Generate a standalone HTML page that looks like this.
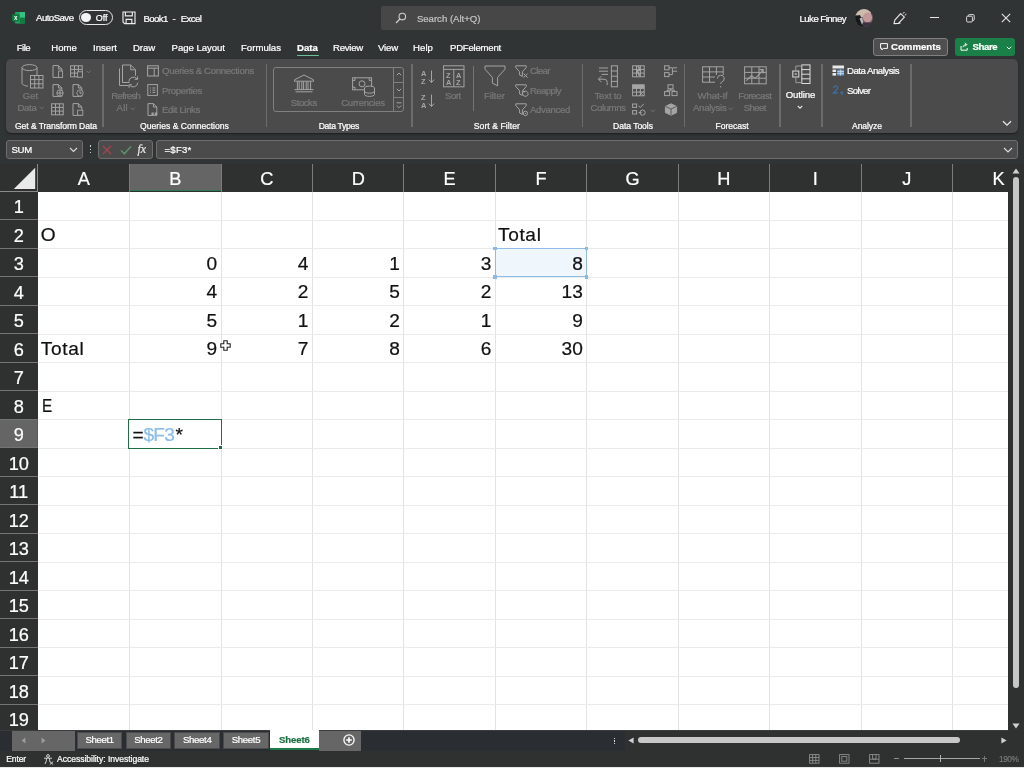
<!DOCTYPE html>
<html lang="en"><head><meta charset="utf-8"><title>Book1 - Excel</title>
<style>
html,body{margin:0;padding:0;}
body{width:1024px;height:768px;overflow:hidden;position:relative;background:#313435;font-family:"Liberation Sans",sans-serif;}
.b{position:absolute;display:block;}
.t{position:absolute;white-space:pre;display:block;-webkit-text-stroke:0.22px currentColor;}
svg{overflow:visible;}
</style></head><body>
<div id="app" style="position:absolute;left:0;top:0;width:1024px;height:768px;will-change:transform;">
<svg class="b" style="left:11.5px;top:11.5px;" width="13" height="11.5" viewBox="0 0 13 11.5"><rect x="3" y="0" width="10" height="11.5" rx="1" fill="#21a366"/><rect x="8" y="0" width="5" height="5.7" fill="#33c481"/><rect x="8" y="5.7" width="5" height="5.8" fill="#107c41"/><rect x="0" y="2.2" width="7.4" height="7.4" rx="0.8" fill="#0e7a3e"/><text x="3.7" y="8.2" font-family="Liberation Sans, sans-serif" font-size="6.3" font-weight="700" fill="#fff" text-anchor="middle">x</text></svg>
<span class="t" style="left:36.00px;top:12.44px;font-size:9.6px;line-height:11.52px;color:#ffffff;letter-spacing:-0.516px;">AutoSave</span>
<div class="b" style="left:78.5px;top:10.3px;width:34px;height:14.4px;border:1.2px solid #e8e8e8;border-radius:8px;box-sizing:border-box;"></div>
<div class="b" style="left:81px;top:13.4px;width:9.8px;height:8.4px;background:#f4f4f4;border-radius:50%;"></div>
<span class="t" style="left:95.80px;top:12.80px;font-size:9.0px;line-height:10.80px;color:#ffffff;letter-spacing:-0.013px;">Off</span>
<svg class="b" style="left:121.5px;top:11.3px;" width="14" height="13.5" viewBox="0 0 14 13.5"><path d="M1 1h12v11.6H2.7L1 11z M3.4 1v3.9h6.9V1 M4.1 12.6V8.3h5.7v4.3" fill="none" stroke="#ededed" stroke-width="1.15"/></svg>
<span class="t" style="left:143.60px;top:12.64px;font-size:9.6px;line-height:11.52px;color:#ffffff;letter-spacing:-0.644px;">Book1</span>
<span class="t" style="left:172.60px;top:12.64px;font-size:9.6px;line-height:11.52px;color:#ffffff;letter-spacing:0.000px;">-</span>
<span class="t" style="left:180.80px;top:12.64px;font-size:9.6px;line-height:11.52px;color:#ffffff;letter-spacing:-0.595px;">Excel</span>
<div class="b" style="left:381px;top:6px;width:275.3px;height:24px;background:#474747;border-radius:2px;"></div>
<svg class="b" style="left:395px;top:12px;" width="12" height="12" viewBox="0 0 12 12"><circle cx="7.3" cy="4.6" r="3.3" fill="none" stroke="#cfcfcf" stroke-width="1.1"/><path d="M4.9 7L1 11" stroke="#cfcfcf" stroke-width="1.2"/></svg>
<span class="t" style="left:416.90px;top:12.94px;font-size:9.6px;line-height:11.52px;color:#c2c2c2;letter-spacing:-0.011px;">Search (Alt+Q)</span>
<span class="t" style="left:799.50px;top:12.64px;font-size:9.6px;line-height:11.52px;color:#ffffff;letter-spacing:-0.527px;">Luke Finney</span>
<svg class="b" style="left:855px;top:9px;" width="18" height="18" viewBox="0 0 18 18"><defs><clipPath id="av"><circle cx="9" cy="9" r="8.9"/></clipPath></defs><g clip-path="url(#av)"><rect width="18" height="18" fill="#7a5f66"/><ellipse cx="8" cy="3.5" rx="8" ry="4.5" fill="#cbbcae"/><ellipse cx="12.5" cy="8.5" rx="4.6" ry="5" fill="#c39a9c"/><path d="M0 7l5-1 2 5 1.5 7H0z" fill="#17181a"/><path d="M4.5 9.5l2.6-1 1 4.5-1 3z" fill="#b9b9bd"/><rect x="8" y="13.5" width="10" height="5" fill="#3d3243"/></g></svg>
<svg class="b" style="left:892.5px;top:10.5px;" width="14" height="14" viewBox="0 0 14 14"><path d="M1 12.6l0.8-3.4L7.6 2.6l3.8 3.6-6 6.2z M5.4 12.4l2-0.4" fill="none" stroke="#ececec" stroke-width="1.1" stroke-linejoin="round"/><path d="M10.2 2.6l1.2-1.6 M11.8 4.2l1.6-1" fill="none" stroke="#ececec" stroke-width="1"/></svg>
<div class="b" style="left:930.3px;top:16.6px;width:8.4px;height:1px;background:#e6e6e6;"></div>
<svg class="b" style="left:966px;top:13.6px;" width="9" height="9" viewBox="0 0 9 9"><rect x="0.6" y="2.2" width="5.8" height="5.8" rx="1.1" fill="none" stroke="#e6e6e6" stroke-width="0.95"/><path d="M2.3 2V1.7a1.1 1.1 0 0 1 1.1-1.1h3.7a1.1 1.1 0 0 1 1.1 1.1v3.7a1.1 1.1 0 0 1-1.1 1.1H6.7" fill="none" stroke="#e6e6e6" stroke-width="0.95"/></svg>
<svg class="b" style="left:1001px;top:13px;" width="10" height="10" viewBox="0 0 10 10"><path d="M0.8 0.8l8.4 8.4M9.2 0.8L0.8 9.2" stroke="#e6e6e6" stroke-width="1.1"/></svg>
<span class="t" style="left:16.80px;top:41.64px;font-size:9.6px;line-height:11.52px;color:#ffffff;letter-spacing:-0.567px;">File</span>
<span class="t" style="left:51.20px;top:41.64px;font-size:9.6px;line-height:11.52px;color:#ffffff;letter-spacing:0.048px;">Home</span>
<span class="t" style="left:93.00px;top:41.64px;font-size:9.6px;line-height:11.52px;color:#ffffff;letter-spacing:-0.002px;">Insert</span>
<span class="t" style="left:133.00px;top:41.64px;font-size:9.6px;line-height:11.52px;color:#ffffff;letter-spacing:-0.100px;">Draw</span>
<span class="t" style="left:171.60px;top:41.64px;font-size:9.6px;line-height:11.52px;color:#ffffff;letter-spacing:-0.046px;">Page Layout</span>
<span class="t" style="left:241.00px;top:41.64px;font-size:9.6px;line-height:11.52px;color:#ffffff;letter-spacing:-0.001px;">Formulas</span>
<span class="t" style="left:297.00px;top:41.64px;font-size:9.6px;line-height:11.52px;color:#ffffff;letter-spacing:0.048px;font-weight:700;">Data</span>
<span class="t" style="left:333.00px;top:41.64px;font-size:9.6px;line-height:11.52px;color:#ffffff;letter-spacing:-0.246px;">Review</span>
<span class="t" style="left:378.00px;top:41.64px;font-size:9.6px;line-height:11.52px;color:#ffffff;letter-spacing:-0.159px;">View</span>
<span class="t" style="left:413.00px;top:41.64px;font-size:9.6px;line-height:11.52px;color:#ffffff;letter-spacing:0.064px;">Help</span>
<span class="t" style="left:450.00px;top:41.64px;font-size:9.6px;line-height:11.52px;color:#ffffff;letter-spacing:-0.235px;">PDFelement</span>
<div class="b" style="left:297px;top:54.9px;width:21.5px;height:1.2px;background:#6cc097;border-radius:1px;"></div>
<div class="b" style="left:873.4px;top:38px;width:75px;height:18.3px;background:#4f4f4f;border:1px solid #808080;border-radius:3px;box-sizing:border-box;"></div>
<svg class="b" style="left:879.5px;top:42.5px;" width="8" height="8" viewBox="0 0 8 8"><path d="M0.6 0.6h6.8v4.8H3.4L1.8 7V5.4H0.6z" fill="none" stroke="#fff" stroke-width="1"/></svg>
<span class="t" style="left:891.00px;top:41.44px;font-size:9.6px;line-height:11.52px;color:#ffffff;letter-spacing:0.024px;font-weight:700;">Comments</span>
<div class="b" style="left:954.6px;top:38px;width:60.8px;height:18.3px;background:#1a8048;border-radius:3px;"></div>
<svg class="b" style="left:959.5px;top:42px;" width="9" height="9" viewBox="0 0 9 9"><path d="M1 4v4.2h6.2V6 M3 5.2C3.4 3.4 4.6 2.6 6.2 2.6 M5 0.8l1.8 1.8L5 4.4" fill="none" stroke="#fff" stroke-width="1"/></svg>
<span class="t" style="left:972.50px;top:41.44px;font-size:9.6px;line-height:11.52px;color:#ffffff;letter-spacing:-0.376px;font-weight:700;">Share</span>
<svg class="b" style="left:1005.5px;top:45.5px;" width="6" height="4" viewBox="0 0 6 4"><path d="M0.8 0.8L3 3l2.2-2.2" fill="none" stroke="#fff" stroke-width="1"/></svg>
<div class="b" style="left:6px;top:59px;width:1012px;height:74.3px;background:#4b4b4b;border-radius:5px;box-shadow:0 1px 2px rgba(0,0,0,.45);"></div>
<div class="b" style="left:102.2px;top:63.5px;width:1.6px;height:63.5px;background:#6c6c6c;"></div>
<div class="b" style="left:265.8px;top:63.5px;width:1.6px;height:63.5px;background:#6c6c6c;"></div>
<div class="b" style="left:411.2px;top:63.5px;width:1.6px;height:63.5px;background:#6c6c6c;"></div>
<div class="b" style="left:581.6px;top:63.5px;width:1.6px;height:63.5px;background:#6c6c6c;"></div>
<div class="b" style="left:683.6px;top:63.5px;width:1.6px;height:63.5px;background:#6c6c6c;"></div>
<div class="b" style="left:779.0px;top:63.5px;width:1.6px;height:63.5px;background:#6c6c6c;"></div>
<div class="b" style="left:821.1px;top:63.5px;width:1.6px;height:63.5px;background:#6c6c6c;"></div>
<div class="b" style="left:910.2px;top:63.5px;width:1.6px;height:63.5px;background:#6c6c6c;"></div>
<div class="b" style="left:473.4px;top:66px;width:1px;height:45px;background:#757575;"></div>
<span class="t" style="left:15.00px;top:120.64px;font-size:8.6px;line-height:10.32px;color:#ffffff;letter-spacing:-0.082px;">Get &amp; Transform Data</span>
<span class="t" style="left:140.00px;top:120.64px;font-size:8.6px;line-height:10.32px;color:#ffffff;letter-spacing:0.027px;">Queries &amp; Connections</span>
<span class="t" style="left:318.70px;top:120.64px;font-size:8.6px;line-height:10.32px;color:#ffffff;letter-spacing:-0.304px;">Data Types</span>
<span class="t" style="left:473.80px;top:120.64px;font-size:8.6px;line-height:10.32px;color:#ffffff;letter-spacing:0.062px;">Sort &amp; Filter</span>
<span class="t" style="left:613.00px;top:120.64px;font-size:8.6px;line-height:10.32px;color:#ffffff;letter-spacing:-0.048px;">Data Tools</span>
<span class="t" style="left:715.50px;top:120.64px;font-size:8.6px;line-height:10.32px;color:#ffffff;letter-spacing:-0.057px;">Forecast</span>
<span class="t" style="left:852.00px;top:120.64px;font-size:8.6px;line-height:10.32px;color:#ffffff;letter-spacing:-0.085px;">Analyze</span>
<svg class="b" style="left:1002px;top:120px;" width="10" height="7" viewBox="0 0 10 7"><path d="M1 1.2l4 4 4-4" fill="none" stroke="#e8e8e8" stroke-width="1.3"/></svg>
<svg class="b" style="left:21px;top:64px;" width="23" height="25" viewBox="0 0 23 25"><ellipse cx="8.5" cy="3.6" rx="7.5" ry="3" fill="none" stroke="#a4a4a4" stroke-width="1"/><path d="M1 3.6v15.5c0 1.6 3 3 6 3 M16 3.6v7.4" fill="none" stroke="#a4a4a4" stroke-width="1"/><rect x="9.5" y="11.5" width="12.5" height="12.5" fill="#4b4b4b" stroke="#a4a4a4" stroke-width="1"/><path d="M9.5 15.6h12.5M9.5 19.8h12.5M13.7 11.5v12.5M17.9 11.5v12.5" fill="none" stroke="#a4a4a4" stroke-width="1"/></svg>
<span class="t" style="left:22.76px;top:90.04px;font-size:9.6px;line-height:11.52px;color:#797979;letter-spacing:0.000px;">Get</span>
<span class="t" style="left:17.50px;top:101.74px;font-size:9.6px;line-height:11.52px;color:#797979;letter-spacing:-0.320px;">Data</span>
<svg class="b" style="left:38.6px;top:106.4px;" width="5.2" height="3.5" viewBox="0 0 5.2 3.5"><path d="M0.6 0.7l2.10 2.10 2.10 -2.10" fill="none" stroke="#797979" stroke-width="0.9"/></svg>
<svg class="b" style="left:51.5px;top:64.5px;" width="12" height="13" viewBox="0 0 12 13"><path d="M1 0.6h5.4l3.4 3.4v8.4H1z M6.4 0.6v3.4h3.4" fill="none" stroke="#a4a4a4" stroke-width="1"/><rect x="6.6" y="6" width="4" height="6.4" fill="#4b4b4b" stroke="#a4a4a4" stroke-width="0.9"/></svg>
<svg class="b" style="left:70.4px;top:64.5px;" width="13" height="13" viewBox="0 0 13 13"><rect x="0.6" y="0.8" width="11.6" height="11" fill="none" stroke="#a4a4a4" stroke-width="1"/><path d="M0.6 4.4h11.6M0.6 8.1h11.6M4.5 0.8v11M8.4 0.8v11" fill="none" stroke="#a4a4a4" stroke-width="1"/><rect x="7.4" y="6.8" width="5" height="5.4" fill="#4b4b4b" stroke="#a4a4a4" stroke-width="0.9"/></svg>
<svg class="b" style="left:85.8px;top:69.6px;" width="5.2" height="3.5" viewBox="0 0 5.2 3.5"><path d="M0.6 0.7l2.10 2.10 2.10 -2.10" fill="none" stroke="#797979" stroke-width="0.9"/></svg>
<svg class="b" style="left:51.5px;top:83.5px;" width="12" height="13" viewBox="0 0 12 13"><path d="M1 0.6h5.4l3.4 3.4v8.4H1z M6.4 0.6v3.4h3.4" fill="none" stroke="#a4a4a4" stroke-width="1"/><circle cx="8" cy="9" r="3.2" fill="#4b4b4b" stroke="#a4a4a4" stroke-width="0.9"/><path d="M4.8 9h6.4M8 5.8v6.4" fill="none" stroke="#a4a4a4" stroke-width="1"/></svg>
<svg class="b" style="left:71.5px;top:83.5px;" width="12" height="13" viewBox="0 0 12 13"><path d="M1 0.6h5.4l3.4 3.4v8.4H1z M6.4 0.6v3.4h3.4" fill="none" stroke="#a4a4a4" stroke-width="1"/><circle cx="8" cy="9" r="3.2" fill="#4b4b4b" stroke="#a4a4a4" stroke-width="0.9"/><path d="M8 7v2.2h1.8" fill="none" stroke="#a4a4a4" stroke-width="1"/></svg>
<svg class="b" style="left:50.8px;top:103px;" width="13" height="13" viewBox="0 0 13 13"><rect x="0.6" y="0.8" width="11.6" height="11" fill="none" stroke="#a4a4a4" stroke-width="1"/><path d="M0.6 4.4h11.6M0.6 8.1h11.6M4.5 0.8v11M8.4 0.8v11" fill="none" stroke="#a4a4a4" stroke-width="1"/></svg>
<svg class="b" style="left:71.5px;top:103px;" width="12" height="13" viewBox="0 0 12 13"><path d="M1 0.6h5.4l3.4 3.4v8.4H1z M6.4 0.6v3.4h3.4" fill="none" stroke="#a4a4a4" stroke-width="1"/><rect x="5.6" y="7.2" width="5.2" height="5" fill="#4b4b4b" stroke="#a4a4a4" stroke-width="0.9"/></svg>
<svg class="b" style="left:116px;top:64px;" width="23" height="25" viewBox="0 0 23 25"><path d="M3.5 4.5v17h9 M6.5 1h8.2l4.8 4.8v6 M6.5 1v17.5h7 M14.7 1v4.8h4.8" fill="none" stroke="#a4a4a4" stroke-width="1"/><path d="M12.8 17.5a4.6 4.6 0 0 1 8.2-2.6 M21.6 12.3v3h-3 M21.8 18.6a4.6 4.6 0 0 1-8.2 2.6 M13 23.8v-3h3" fill="none" stroke="#a4a4a4" stroke-width="1"/></svg>
<span class="t" style="left:111.30px;top:90.44px;font-size:9.6px;line-height:11.52px;color:#797979;letter-spacing:-0.659px;">Refresh</span>
<span class="t" style="left:116.50px;top:102.24px;font-size:9.6px;line-height:11.52px;color:#797979;letter-spacing:0.277px;">All</span>
<svg class="b" style="left:130px;top:106.8px;" width="5.2" height="3.5" viewBox="0 0 5.2 3.5"><path d="M0.6 0.7l2.10 2.10 2.10 -2.10" fill="none" stroke="#797979" stroke-width="0.9"/></svg>
<svg class="b" style="left:147px;top:65px;" width="12" height="12" viewBox="0 0 12 12"><rect x="0.6" y="0.8" width="10.8" height="10.2" fill="none" stroke="#a4a4a4" stroke-width="1"/><path d="M0.6 3.2h10.8 M7.2 3.2v7.8" fill="none" stroke="#a4a4a4" stroke-width="1"/></svg>
<span class="t" style="left:162.00px;top:65.44px;font-size:9.6px;line-height:11.52px;color:#797979;letter-spacing:-0.320px;">Queries &amp; Connections</span>
<svg class="b" style="left:147px;top:84px;" width="12" height="12" viewBox="0 0 12 12"><rect x="0.8" y="0.6" width="9.6" height="10.8" fill="none" stroke="#a4a4a4" stroke-width="1"/><path d="M3 4h1M5.4 4h3M3 6.2h1M5.4 6.2h3M3 8.4h1M5.4 8.4h3" fill="none" stroke="#a4a4a4" stroke-width="1"/></svg>
<span class="t" style="left:162.00px;top:84.84px;font-size:9.6px;line-height:11.52px;color:#797979;letter-spacing:-0.375px;">Properties</span>
<svg class="b" style="left:147px;top:103px;" width="12" height="13" viewBox="0 0 12 13"><path d="M1 0.6h5.4l3.4 3.4v8.4H1z M6.4 0.6v3.4h3.4" fill="none" stroke="#a4a4a4" stroke-width="1"/><path d="M4.5 10.8h2.2M7.8 10.8h2.4" stroke="#a4a4a4" stroke-width="2.4" fill="none"/></svg>
<span class="t" style="left:162.00px;top:103.84px;font-size:9.6px;line-height:11.52px;color:#797979;letter-spacing:-0.362px;">Edit Links</span>
<div class="b" style="left:273.2px;top:67px;width:131px;height:45.4px;border:1px solid #808080;border-radius:3px;box-sizing:border-box;"></div>
<div class="b" style="left:393px;top:67px;width:1px;height:45.4px;background:#808080;"></div>
<div class="b" style="left:393px;top:82px;width:11px;height:1px;background:#808080;"></div>
<div class="b" style="left:393px;top:97px;width:11px;height:1px;background:#808080;"></div>
<svg class="b" style="left:395.5px;top:72px;" width="6" height="4" viewBox="0 0 6 4"><path d="M0.8 3.2L3 1l2.2 2.2" fill="none" stroke="#a4a4a4" stroke-width="1"/></svg>
<svg class="b" style="left:395.5px;top:88px;" width="6" height="4" viewBox="0 0 6 4"><path d="M0.8 0.8L3 3l2.2-2.2" fill="none" stroke="#a4a4a4" stroke-width="1"/></svg>
<svg class="b" style="left:395.5px;top:101.5px;" width="6" height="7" viewBox="0 0 6 7"><path d="M0.5 0.8h5 M0.8 3.6L3 5.8l2.2-2.2" fill="none" stroke="#a4a4a4" stroke-width="1"/></svg>
<svg class="b" style="left:293px;top:74px;" width="22" height="19" viewBox="0 0 22 19"><path d="M1.5 5.8L11 1l9.5 4.8v1.4h-19z M2.5 17.8h17 M1.5 15.6h19 M4.4 7.4v8M8.8 7.4v8M13.2 7.4v8M17.6 7.4v8 M6.2 7.4v8M10.6 7.4v8M15 7.4v8" fill="none" stroke="#a4a4a4" stroke-width="1"/></svg>
<span class="t" style="left:290.80px;top:96.84px;font-size:9.6px;line-height:11.52px;color:#797979;letter-spacing:-0.468px;">Stocks</span>
<svg class="b" style="left:352px;top:77px;" width="24" height="20" viewBox="0 0 24 20"><rect x="0.6" y="0.8" width="19" height="12" fill="none" stroke="#a4a4a4" stroke-width="1"/><circle cx="10" cy="6.8" r="3" fill="none" stroke="#a4a4a4" stroke-width="1"/><path d="M0.6 3.4h2.4V0.8M17.2 0.8v2.6h2.4M0.6 10.2h2.4v2.6M17.2 12.8v-2.6h2.4" fill="none" stroke="#a4a4a4" stroke-width="1"/><ellipse cx="17.5" cy="11" rx="5" ry="2" fill="#4b4b4b" stroke="#a4a4a4"/><path d="M12.5 11v6.4c0 1.1 2.2 2 5 2s5-.9 5-2V11 M12.5 14.2c0 1.1 2.2 2 5 2s5-.9 5-2" fill="#4b4b4b" stroke="#a4a4a4"/></svg>
<span class="t" style="left:341.20px;top:96.84px;font-size:9.6px;line-height:11.52px;color:#797979;letter-spacing:-0.282px;">Currencies</span>
<svg class="b" style="left:420.5px;top:68.8px;" width="15" height="16" viewBox="0 0 15 16"><text x="0" y="6.6" font-family="Liberation Sans, sans-serif" font-size="7.4" font-weight="700" fill="#a4a4a4">A</text><text x="0" y="14.6" font-family="Liberation Sans, sans-serif" font-size="7.4" font-weight="700" fill="#a4a4a4">Z</text><path d="M10.5 1.5v12 M7.8 10.6l2.7 2.9 2.7-2.9" fill="none" stroke="#a4a4a4" stroke-width="1"/></svg>
<svg class="b" style="left:420.5px;top:92.6px;" width="15" height="16" viewBox="0 0 15 16"><text x="0" y="6.6" font-family="Liberation Sans, sans-serif" font-size="7.4" font-weight="700" fill="#a4a4a4">Z</text><text x="0" y="14.6" font-family="Liberation Sans, sans-serif" font-size="7.4" font-weight="700" fill="#a4a4a4">A</text><path d="M10.5 1.5v12 M7.8 10.6l2.7 2.9 2.7-2.9" fill="none" stroke="#a4a4a4" stroke-width="1"/></svg>
<svg class="b" style="left:443px;top:64.5px;" width="22" height="23" viewBox="0 0 22 23"><rect x="0.6" y="0.8" width="20.4" height="21" fill="none" stroke="#a4a4a4" stroke-width="1"/><path d="M0.6 4.4h20.4 M10.8 4.4v17.4" fill="none" stroke="#a4a4a4" stroke-width="1"/><text x="3" y="12.5" font-family="Liberation Sans, sans-serif" font-size="7.4" font-weight="700" fill="#a4a4a4">Z</text><text x="3" y="20.3" font-family="Liberation Sans, sans-serif" font-size="7.4" font-weight="700" fill="#a4a4a4">A</text><text x="13" y="12.5" font-family="Liberation Sans, sans-serif" font-size="7.4" font-weight="700" fill="#a4a4a4">A</text><text x="13" y="20.3" font-family="Liberation Sans, sans-serif" font-size="7.4" font-weight="700" fill="#a4a4a4">Z</text></svg>
<span class="t" style="left:444.90px;top:90.44px;font-size:9.6px;line-height:11.52px;color:#797979;letter-spacing:-0.402px;">Sort</span>
<svg class="b" style="left:483.5px;top:64.5px;" width="22" height="23" viewBox="0 0 22 23"><path d="M1 1h20v3.2l-7.4 8.2v8.4l-5.2-2.6v-5.8L1 4.2z" fill="none" stroke="#a4a4a4" stroke-width="1"/></svg>
<span class="t" style="left:483.90px;top:90.44px;font-size:9.6px;line-height:11.52px;color:#797979;letter-spacing:-0.055px;">Filter</span>
<svg class="b" style="left:515px;top:64.5px;" width="14" height="14" viewBox="0 0 14 14"><path d="M0.8 0.8h10.4v1.8L7.4 6.8v4.6L4.6 10V6.8L0.8 2.6z" fill="none" stroke="#a4a4a4" stroke-width="1"/><path d="M8.6 8.6l4 4M12.6 8.6l-4 4" fill="none" stroke="#a4a4a4" stroke-width="1"/></svg>
<span class="t" style="left:530.00px;top:65.44px;font-size:9.6px;line-height:11.52px;color:#797979;letter-spacing:-0.628px;">Clear</span>
<svg class="b" style="left:515px;top:83.5px;" width="14" height="14" viewBox="0 0 14 14"><path d="M0.8 0.8h10.4v1.8L7.4 6.8v4.6L4.6 10V6.8L0.8 2.6z" fill="none" stroke="#a4a4a4" stroke-width="1"/><path d="M8 10.4a2.6 2.6 0 1 0 1-2.8 M8.4 6.6v1.4h1.4" fill="none" stroke="#a4a4a4" stroke-width="1"/></svg>
<span class="t" style="left:530.00px;top:84.84px;font-size:9.6px;line-height:11.52px;color:#797979;letter-spacing:-0.603px;">Reapply</span>
<svg class="b" style="left:515px;top:102.5px;" width="14" height="14" viewBox="0 0 14 14"><path d="M0.8 0.8h10.4v1.8L7.4 6.8v4.6L4.6 10V6.8L0.8 2.6z" fill="none" stroke="#a4a4a4" stroke-width="1"/><circle cx="10.4" cy="10.4" r="2.2" fill="none" stroke="#a4a4a4" stroke-width="1"/><circle cx="10.4" cy="10.4" r="0.7" fill="#a4a4a4"/></svg>
<span class="t" style="left:530.00px;top:103.84px;font-size:9.6px;line-height:11.52px;color:#797979;letter-spacing:-0.337px;">Advanced</span>
<svg class="b" style="left:597px;top:64.5px;" width="25" height="23" viewBox="0 0 25 23"><path d="M2 3h9M2 6.2h9M4.6 9.4h6.4" fill="none" stroke="#a4a4a4" stroke-width="1"/><path d="M4.4 11.2l-3 3 3 3 M1.6 14.2h5.6a3 3 0 0 1 3 3v3" fill="none" stroke="#a4a4a4" stroke-width="1"/><rect x="14.4" y="0.8" width="6" height="21" fill="none" stroke="#a4a4a4" stroke-width="1"/><path d="M14.4 6h6M14.4 11.2h6M14.4 16.4h6" fill="none" stroke="#a4a4a4" stroke-width="1"/></svg>
<span class="t" style="left:594.50px;top:90.44px;font-size:9.6px;line-height:11.52px;color:#797979;letter-spacing:-0.183px;">Text to</span>
<span class="t" style="left:590.50px;top:102.24px;font-size:9.6px;line-height:11.52px;color:#797979;letter-spacing:-0.411px;">Columns</span>
<svg class="b" style="left:632px;top:64.5px;" width="13" height="13" viewBox="0 0 13 13"><rect x="0.6" y="0.8" width="11.6" height="11" fill="none" stroke="#a4a4a4" stroke-width="1"/><path d="M0.6 4.4h11.6M0.6 8.1h11.6M4.5 0.8v11M8.4 0.8v11" fill="none" stroke="#a4a4a4" stroke-width="1"/><path d="M6 0.6l2.2 4.6-3 .6 2.4 5" stroke="#a4a4a4" stroke-width="1.6" fill="none"/></svg>
<svg class="b" style="left:632px;top:83.8px;" width="13" height="13" viewBox="0 0 13 13"><rect x="0.6" y="0.8" width="11.6" height="11" fill="none" stroke="#a4a4a4" stroke-width="1"/><path d="M0.6 4.4h11.6M0.6 8.1h11.6M4.5 0.8v11M8.4 0.8v11" fill="none" stroke="#a4a4a4" stroke-width="1"/><path d="M7 7.2l4.6 4.6M11.6 7.2L7 11.8" fill="none" stroke="#a4a4a4" stroke-width="1"/><rect x="0.6" y="0.8" width="11.6" height="3.6" fill="#a4a4a4"/></svg>
<svg class="b" style="left:632px;top:103px;" width="14" height="13" viewBox="0 0 14 13"><rect x="0.6" y="1" width="4" height="3.4" fill="none" stroke="#a4a4a4" stroke-width="1"/><rect x="0.6" y="7.6" width="4" height="3.4" fill="none" stroke="#a4a4a4" stroke-width="1"/><path d="M6.6 2.8l1.8 1.6 3.4-3.6 M6.6 9.6h3" fill="none" stroke="#a4a4a4" stroke-width="1"/><circle cx="10.6" cy="9.6" r="2.6" fill="none" stroke="#a4a4a4" stroke-width="1"/></svg>
<svg class="b" style="left:649.8px;top:108.6px;" width="5.2" height="3.5" viewBox="0 0 5.2 3.5"><path d="M0.6 0.7l2.10 2.10 2.10 -2.10" fill="none" stroke="#797979" stroke-width="0.9"/></svg>
<svg class="b" style="left:663.5px;top:64.5px;" width="14" height="13" viewBox="0 0 14 13"><rect x="0.6" y="0.8" width="4.4" height="4" fill="none" stroke="#a4a4a4" stroke-width="1"/><rect x="0.6" y="7.6" width="4.4" height="4" fill="none" stroke="#a4a4a4" stroke-width="1"/><path d="M5 2.8h3.4v6.8H5 M8.4 6.2h4.8 M9 2.8h4" fill="none" stroke="#a4a4a4" stroke-width="1"/></svg>
<svg class="b" style="left:663.5px;top:83.8px;" width="14" height="13" viewBox="0 0 14 13"><rect x="4" y="0.8" width="5" height="4" fill="none" stroke="#a4a4a4" stroke-width="1"/><rect x="0.6" y="7.6" width="5" height="4" fill="none" stroke="#a4a4a4" stroke-width="1"/><rect x="8" y="7.6" width="5" height="4" fill="none" stroke="#a4a4a4" stroke-width="1"/><path d="M6.5 4.8v1.4H3v1.4 M6.5 6.2h4v1.4" fill="none" stroke="#a4a4a4" stroke-width="1"/></svg>
<svg class="b" style="left:663.5px;top:103px;" width="14" height="13" viewBox="0 0 14 13"><path d="M7 0.8l5.6 2.6v6.2L7 12.2 1.4 9.6V3.4z" fill="#a4a4a4" stroke="#a4a4a4" stroke-width="1"/><path d="M1.4 3.4L7 6l5.6-2.6M7 6v6.2" fill="none" stroke="#4b4b4b" stroke-width="0.8"/></svg>
<svg class="b" style="left:701.5px;top:65.5px;" width="25" height="23" viewBox="0 0 25 23"><rect x="0.6" y="0.8" width="20.6" height="15.4" fill="none" stroke="#a4a4a4" stroke-width="1"/><path d="M0.6 5.9h20.6M0.6 11h20.6M7.5 0.8v15.4M14.4 0.8v15.4" fill="none" stroke="#a4a4a4" stroke-width="1"/><rect x="13" y="9" width="11" height="13" fill="#4b4b4b"/><path d="M15.4 12.6a3.4 3.4 0 1 1 4.6 3.2c-1 .5-1.3 1-1.3 2.2 M18.7 20v1.4" fill="none" stroke="#a4a4a4" stroke-width="1"/></svg>
<span class="t" style="left:697.60px;top:90.04px;font-size:9.6px;line-height:11.52px;color:#797979;letter-spacing:-0.134px;">What-If</span>
<span class="t" style="left:693.00px;top:101.84px;font-size:9.6px;line-height:11.52px;color:#797979;letter-spacing:-0.281px;">Analysis</span>
<svg class="b" style="left:728px;top:106.6px;" width="5.2" height="3.5" viewBox="0 0 5.2 3.5"><path d="M0.6 0.7l2.10 2.10 2.10 -2.10" fill="none" stroke="#797979" stroke-width="0.9"/></svg>
<svg class="b" style="left:743.5px;top:65.5px;" width="24" height="19" viewBox="0 0 24 19"><rect x="0.6" y="0.8" width="21.6" height="17" fill="none" stroke="#a4a4a4" stroke-width="1"/><path d="M0.6 6.4h21.6M0.6 12.2h21.6M7.8 0.8v17M15 0.8v17" fill="none" stroke="#a4a4a4" stroke-width="1"/><path d="M2.4 14.6l5-4.8 4 2.6 7.6-8.2 M15.4 3.6h3.8v3.8" fill="none" stroke="#a4a4a4" stroke-width="1.1"/></svg>
<span class="t" style="left:738.30px;top:90.04px;font-size:9.6px;line-height:11.52px;color:#797979;letter-spacing:-0.543px;">Forecast</span>
<span class="t" style="left:743.80px;top:101.84px;font-size:9.6px;line-height:11.52px;color:#797979;letter-spacing:-0.618px;">Sheet</span>
<svg class="b" style="left:791.5px;top:63.5px;" width="19" height="20" viewBox="0 0 19 20"><rect x="9.8" y="0.9" width="8.2" height="18.6" fill="none" stroke="#dcdcdc" stroke-width="1"/><path d="M9.8 5.6h8.2M9.8 10.2h8.2M9.8 14.8h8.2" fill="none" stroke="#dcdcdc" stroke-width="1"/><rect x="0.8" y="7" width="6" height="6" fill="none" stroke="#dcdcdc" stroke-width="1"/><path d="M2.6 10h2.4" fill="none" stroke="#dcdcdc" stroke-width="1"/><path d="M3.8 7V2h6 M3.8 13v5.6h6" fill="none" stroke="#9c9c9c" stroke-width="1"/></svg>
<span class="t" style="left:785.65px;top:88.94px;font-size:9.6px;line-height:11.52px;color:#ffffff;letter-spacing:-0.131px;">Outline</span>
<svg class="b" style="left:797.3px;top:104.6px;" width="6" height="4" viewBox="0 0 6 4"><path d="M0.7 0.8l2.3 2.3 2.3-2.3" fill="none" stroke="#e8e8e8" stroke-width="1.1"/></svg>
<svg class="b" style="left:831.5px;top:65px;" width="13" height="12" viewBox="0 0 13 12"><rect x="0.5" y="0.5" width="11.5" height="3" fill="#e8e8e8"/><rect x="0.5" y="4.6" width="3.6" height="2.4" fill="#e8e8e8"/><rect x="0.5" y="8" width="3.6" height="2.6" fill="#e8e8e8"/><rect x="5.2" y="4.6" width="6.8" height="6" fill="#5b9bd5"/><path d="M5.2 6.6h6.8M5.2 8.6h6.8M8.6 4.6v6" stroke="#e8e8e8" stroke-width="0.7"/></svg>
<span class="t" style="left:847.00px;top:65.24px;font-size:9.6px;line-height:11.52px;color:#ffffff;letter-spacing:-0.474px;">Data Analysis</span>
<svg class="b" style="left:831.5px;top:84.5px;" width="13" height="12" viewBox="0 0 13 12"><path d="M1.6 3a2 2 0 1 1 3.2 1.6L1.4 8h4.2" fill="none" stroke="#3d6fa6" stroke-width="1.3"/><path d="M8.6 6.4l1.6 3.4 M10.2 6.4v3.4" fill="none" stroke="#3d6fa6" stroke-width="1.2"/></svg>
<span class="t" style="left:847.00px;top:84.64px;font-size:9.6px;line-height:11.52px;color:#ffffff;letter-spacing:-0.635px;">Solver</span>
<div class="b" style="left:6px;top:139.6px;width:76.6px;height:19px;background:#4b4b4b;border:1px solid #6e6e6e;border-radius:3px;box-sizing:border-box;"></div>
<span class="t" style="left:11.50px;top:143.64px;font-size:9.6px;line-height:11.52px;color:#ffffff;letter-spacing:-0.278px;">SUM</span>
<svg class="b" style="left:69px;top:146.5px;" width="9" height="6" viewBox="0 0 9 6"><path d="M1 1l3.5 3.5L8 1" fill="none" stroke="#dadada" stroke-width="1.1"/></svg>
<div class="b" style="left:89.5px;top:145.4px;width:1.3px;height:1.3px;background:#cfcfcf;"></div>
<div class="b" style="left:89.5px;top:148.6px;width:1.3px;height:1.3px;background:#cfcfcf;"></div>
<div class="b" style="left:89.5px;top:151.8px;width:1.3px;height:1.3px;background:#cfcfcf;"></div>
<div class="b" style="left:97.5px;top:139.6px;width:55px;height:19px;background:#4b4b4b;border:1px solid #6e6e6e;border-radius:3px;box-sizing:border-box;"></div>
<svg class="b" style="left:102px;top:144.5px;" width="10" height="10" viewBox="0 0 10 10"><path d="M1 1l8 8M9 1L1 9" stroke="#a9454d" stroke-width="1.1"/></svg>
<svg class="b" style="left:119.5px;top:144.5px;" width="12" height="10" viewBox="0 0 12 10"><path d="M1 5.4l3.4 3.4L11 1.4" fill="none" stroke="#5d9c72" stroke-width="1.3"/></svg>
<span class="t" style="left:137.5px;top:141.8px;font-size:12px;line-height:14px;color:#e8e8e8;font-family:'Liberation Serif',serif;font-style:italic;font-weight:400;letter-spacing:-0.2px;">fx</span>
<div class="b" style="left:156.2px;top:139.6px;width:861.6px;height:19px;background:#4b4b4b;border:1px solid #6e6e6e;border-radius:3px;box-sizing:border-box;"></div>
<span class="t" style="left:164.50px;top:143.54px;font-size:9.6px;line-height:11.52px;color:#ffffff;letter-spacing:0.223px;">=$F3*</span>
<svg class="b" style="left:1003px;top:146.5px;" width="10" height="6" viewBox="0 0 10 6"><path d="M1 1l4 4 4-4" fill="none" stroke="#dadada" stroke-width="1.2"/></svg>
<div class="b" style="left:0;top:163.5px;width:1024px;height:566.5px;background:#2f3030;"></div>
<div class="b" style="left:38.2px;top:191.5px;width:970.0999999999999px;height:538.5px;background:#fff;overflow:hidden;">
<div class="b" style="left:90.9px;top:0;width:1px;height:600px;background:#e3e3e3;"></div>
<div class="b" style="left:182.4px;top:0;width:1px;height:600px;background:#e3e3e3;"></div>
<div class="b" style="left:273.8px;top:0;width:1px;height:600px;background:#e3e3e3;"></div>
<div class="b" style="left:365.2px;top:0;width:1px;height:600px;background:#e3e3e3;"></div>
<div class="b" style="left:456.7px;top:0;width:1px;height:600px;background:#e3e3e3;"></div>
<div class="b" style="left:548.1px;top:0;width:1px;height:600px;background:#e3e3e3;"></div>
<div class="b" style="left:639.5px;top:0;width:1px;height:600px;background:#e3e3e3;"></div>
<div class="b" style="left:730.9px;top:0;width:1px;height:600px;background:#e3e3e3;"></div>
<div class="b" style="left:822.4px;top:0;width:1px;height:600px;background:#e3e3e3;"></div>
<div class="b" style="left:913.8px;top:0;width:1px;height:600px;background:#e3e3e3;"></div>
<div class="b" style="left:1005.2px;top:0;width:1px;height:600px;background:#e3e3e3;"></div>
<div class="b" style="left:0;top:28.0px;width:1000px;height:1px;background:#ebebeb;"></div>
<div class="b" style="left:0;top:56.5px;width:1000px;height:1px;background:#ebebeb;"></div>
<div class="b" style="left:0;top:85.0px;width:1000px;height:1px;background:#ebebeb;"></div>
<div class="b" style="left:0;top:113.5px;width:1000px;height:1px;background:#ebebeb;"></div>
<div class="b" style="left:0;top:142.0px;width:1000px;height:1px;background:#ebebeb;"></div>
<div class="b" style="left:0;top:170.5px;width:1000px;height:1px;background:#ebebeb;"></div>
<div class="b" style="left:0;top:199.0px;width:1000px;height:1px;background:#ebebeb;"></div>
<div class="b" style="left:0;top:227.5px;width:1000px;height:1px;background:#ebebeb;"></div>
<div class="b" style="left:0;top:256.0px;width:1000px;height:1px;background:#ebebeb;"></div>
<div class="b" style="left:0;top:284.5px;width:1000px;height:1px;background:#ebebeb;"></div>
<div class="b" style="left:0;top:313.0px;width:1000px;height:1px;background:#ebebeb;"></div>
<div class="b" style="left:0;top:341.5px;width:1000px;height:1px;background:#ebebeb;"></div>
<div class="b" style="left:0;top:370.0px;width:1000px;height:1px;background:#ebebeb;"></div>
<div class="b" style="left:0;top:398.5px;width:1000px;height:1px;background:#ebebeb;"></div>
<div class="b" style="left:0;top:427.0px;width:1000px;height:1px;background:#ebebeb;"></div>
<div class="b" style="left:0;top:455.5px;width:1000px;height:1px;background:#ebebeb;"></div>
<div class="b" style="left:0;top:484.0px;width:1000px;height:1px;background:#ebebeb;"></div>
<div class="b" style="left:0;top:512.5px;width:1000px;height:1px;background:#ebebeb;"></div>
<div class="b" style="left:0;top:541.0px;width:1000px;height:1px;background:#ebebeb;"></div>
</div>
<span class="t" style="left:77.85px;top:168.78px;font-size:18.2px;line-height:21.84px;color:#ffffff;letter-spacing:0.000px;">A</span>
<div class="b" style="left:129.03px;top:163.8px;width:92.03px;height:27.6px;background:#656565;"></div>
<div class="b" style="left:129.63px;top:190.2px;width:91.43px;height:1.1px;background:#2a7a52;"></div>
<div class="b" style="left:129.13px;top:163.5px;width:1px;height:28px;background:#7c7c7c;"></div>
<span class="t" style="left:169.28px;top:168.78px;font-size:18.2px;line-height:21.84px;color:#ffffff;letter-spacing:0.000px;">B</span>
<div class="b" style="left:220.56px;top:163.5px;width:1px;height:28px;background:#7c7c7c;"></div>
<span class="t" style="left:260.20px;top:168.78px;font-size:18.2px;line-height:21.84px;color:#ffffff;letter-spacing:0.000px;">C</span>
<div class="b" style="left:311.99px;top:163.5px;width:1px;height:28px;background:#7c7c7c;"></div>
<span class="t" style="left:351.63px;top:168.78px;font-size:18.2px;line-height:21.84px;color:#ffffff;letter-spacing:0.000px;">D</span>
<div class="b" style="left:403.42px;top:163.5px;width:1px;height:28px;background:#7c7c7c;"></div>
<span class="t" style="left:443.57px;top:168.78px;font-size:18.2px;line-height:21.84px;color:#ffffff;letter-spacing:0.000px;">E</span>
<div class="b" style="left:494.85px;top:163.5px;width:1px;height:28px;background:#7c7c7c;"></div>
<span class="t" style="left:535.51px;top:168.78px;font-size:18.2px;line-height:21.84px;color:#ffffff;letter-spacing:0.000px;">F</span>
<div class="b" style="left:586.2800000000001px;top:163.5px;width:1px;height:28px;background:#7c7c7c;"></div>
<span class="t" style="left:625.42px;top:168.78px;font-size:18.2px;line-height:21.84px;color:#ffffff;letter-spacing:0.000px;">G</span>
<div class="b" style="left:677.71px;top:163.5px;width:1px;height:28px;background:#7c7c7c;"></div>
<span class="t" style="left:717.35px;top:168.78px;font-size:18.2px;line-height:21.84px;color:#ffffff;letter-spacing:0.000px;">H</span>
<div class="b" style="left:769.1400000000001px;top:163.5px;width:1px;height:28px;background:#7c7c7c;"></div>
<span class="t" style="left:812.83px;top:168.78px;font-size:18.2px;line-height:21.84px;color:#ffffff;letter-spacing:0.000px;">I</span>
<div class="b" style="left:860.5700000000002px;top:163.5px;width:1px;height:28px;background:#7c7c7c;"></div>
<span class="t" style="left:902.24px;top:168.78px;font-size:18.2px;line-height:21.84px;color:#ffffff;letter-spacing:0.000px;">J</span>
<div class="b" style="left:952.0000000000001px;top:163.5px;width:1px;height:28px;background:#7c7c7c;"></div>
<span class="t" style="left:992.43px;top:168.78px;font-size:18.2px;line-height:21.84px;color:#ffffff;letter-spacing:0.000px;">K</span>
<svg class="b" style="left:13px;top:167px;" width="23" height="23" viewBox="0 0 23 23"><path d="M22.2 0.8v21.3H0.8z" fill="#eaeaea"/></svg>
<div class="b" style="left:37.2px;top:164px;width:1px;height:27.5px;background:#8a8a8a;"></div>
<div class="b" style="left:0px;top:190.8px;width:38px;height:1px;background:#8a8a8a;"></div>
<div class="b" style="left:0px;top:219.4px;width:37.7px;height:1px;background:#747474;"></div>
<span class="t" style="left:13.74px;top:197.33px;font-size:18.2px;line-height:21.84px;color:#ffffff;letter-spacing:0.000px;">1</span>
<div class="b" style="left:0px;top:247.9px;width:37.7px;height:1px;background:#747474;"></div>
<span class="t" style="left:13.74px;top:225.83px;font-size:18.2px;line-height:21.84px;color:#ffffff;letter-spacing:0.000px;">2</span>
<div class="b" style="left:0px;top:276.4px;width:37.7px;height:1px;background:#747474;"></div>
<span class="t" style="left:13.74px;top:254.33px;font-size:18.2px;line-height:21.84px;color:#ffffff;letter-spacing:0.000px;">3</span>
<div class="b" style="left:0px;top:304.9px;width:37.7px;height:1px;background:#747474;"></div>
<span class="t" style="left:13.74px;top:282.83px;font-size:18.2px;line-height:21.84px;color:#ffffff;letter-spacing:0.000px;">4</span>
<div class="b" style="left:0px;top:333.4px;width:37.7px;height:1px;background:#747474;"></div>
<span class="t" style="left:13.74px;top:311.33px;font-size:18.2px;line-height:21.84px;color:#ffffff;letter-spacing:0.000px;">5</span>
<div class="b" style="left:0px;top:361.9px;width:37.7px;height:1px;background:#747474;"></div>
<span class="t" style="left:13.74px;top:339.83px;font-size:18.2px;line-height:21.84px;color:#ffffff;letter-spacing:0.000px;">6</span>
<div class="b" style="left:0px;top:390.4px;width:37.7px;height:1px;background:#747474;"></div>
<span class="t" style="left:13.74px;top:368.33px;font-size:18.2px;line-height:21.84px;color:#ffffff;letter-spacing:0.000px;">7</span>
<div class="b" style="left:0px;top:418.9px;width:37.7px;height:1px;background:#747474;"></div>
<span class="t" style="left:13.74px;top:396.83px;font-size:18.2px;line-height:21.84px;color:#ffffff;letter-spacing:0.000px;">8</span>
<div class="b" style="left:0px;top:419.5px;width:38.2px;height:28.5px;background:#656565;"></div>
<div class="b" style="left:37.0px;top:419.5px;width:1.2px;height:28.5px;background:#1f7a4a;"></div>
<div class="b" style="left:0px;top:447.4px;width:37.7px;height:1px;background:#747474;"></div>
<span class="t" style="left:13.74px;top:425.33px;font-size:18.2px;line-height:21.84px;color:#ffffff;letter-spacing:0.000px;">9</span>
<div class="b" style="left:0px;top:475.9px;width:37.7px;height:1px;background:#747474;"></div>
<span class="t" style="left:8.68px;top:453.83px;font-size:18.2px;line-height:21.84px;color:#ffffff;letter-spacing:0.000px;">10</span>
<div class="b" style="left:0px;top:504.4px;width:37.7px;height:1px;background:#747474;"></div>
<span class="t" style="left:9.35px;top:482.33px;font-size:18.2px;line-height:21.84px;color:#ffffff;letter-spacing:0.000px;">11</span>
<div class="b" style="left:0px;top:532.9px;width:37.7px;height:1px;background:#747474;"></div>
<span class="t" style="left:8.68px;top:510.83px;font-size:18.2px;line-height:21.84px;color:#ffffff;letter-spacing:0.000px;">12</span>
<div class="b" style="left:0px;top:561.4px;width:37.7px;height:1px;background:#747474;"></div>
<span class="t" style="left:8.68px;top:539.33px;font-size:18.2px;line-height:21.84px;color:#ffffff;letter-spacing:0.000px;">13</span>
<div class="b" style="left:0px;top:589.9px;width:37.7px;height:1px;background:#747474;"></div>
<span class="t" style="left:8.68px;top:567.83px;font-size:18.2px;line-height:21.84px;color:#ffffff;letter-spacing:0.000px;">14</span>
<div class="b" style="left:0px;top:618.4px;width:37.7px;height:1px;background:#747474;"></div>
<span class="t" style="left:8.68px;top:596.33px;font-size:18.2px;line-height:21.84px;color:#ffffff;letter-spacing:0.000px;">15</span>
<div class="b" style="left:0px;top:646.9px;width:37.7px;height:1px;background:#747474;"></div>
<span class="t" style="left:8.68px;top:624.83px;font-size:18.2px;line-height:21.84px;color:#ffffff;letter-spacing:0.000px;">16</span>
<div class="b" style="left:0px;top:675.4px;width:37.7px;height:1px;background:#747474;"></div>
<span class="t" style="left:8.68px;top:653.33px;font-size:18.2px;line-height:21.84px;color:#ffffff;letter-spacing:0.000px;">17</span>
<div class="b" style="left:0px;top:703.9px;width:37.7px;height:1px;background:#747474;"></div>
<span class="t" style="left:8.68px;top:681.83px;font-size:18.2px;line-height:21.84px;color:#ffffff;letter-spacing:0.000px;">18</span>
<div class="b" style="left:0px;top:732.4px;width:37.7px;height:1px;background:#747474;"></div>
<span class="t" style="left:8.68px;top:710.33px;font-size:18.2px;line-height:21.84px;color:#ffffff;letter-spacing:0.000px;">19</span>
<div class="b" style="left:495.35px;top:248.5px;width:91.43px;height:28.5px;background:#eff6fc;"></div>
<div class="b" style="left:494.55px;top:247.7px;width:92.63000000000001px;height:29.7px;border:1.6px solid #8fbbe6;box-sizing:border-box;"></div>
<div class="b" style="left:493.35px;top:246.5px;width:3.6px;height:3.6px;background:#8db8df;"></div>
<div class="b" style="left:584.78px;top:246.5px;width:3.6px;height:3.6px;background:#8db8df;"></div>
<div class="b" style="left:493.35px;top:275.0px;width:3.6px;height:3.6px;background:#8db8df;"></div>
<div class="b" style="left:584.78px;top:275.0px;width:3.6px;height:3.6px;background:#8db8df;"></div>
<span class="t" style="left:40.80px;top:224.42px;font-size:19.1px;line-height:22.92px;color:#111;letter-spacing:0.000px;">O</span>
<span class="t" style="left:497.95px;top:224.42px;font-size:19.1px;line-height:22.92px;color:#111;letter-spacing:0.651px;">Total</span>
<span class="t" style="left:40.80px;top:338.42px;font-size:19.1px;line-height:22.92px;color:#111;letter-spacing:0.651px;">Total</span>
<span class="t" style="left:41.60px;top:395.42px;font-size:19.1px;line-height:22.92px;color:#111;letter-spacing:0.000px;transform:scaleX(0.8);transform-origin:0 50%;">E</span>
<span class="t" style="left:206.44px;top:252.92px;font-size:19.1px;line-height:22.92px;color:#111;letter-spacing:0.000px;">0</span>
<span class="t" style="left:297.87px;top:252.92px;font-size:19.1px;line-height:22.92px;color:#111;letter-spacing:-0.000px;">4</span>
<span class="t" style="left:389.30px;top:252.92px;font-size:19.1px;line-height:22.92px;color:#111;letter-spacing:-0.000px;">1</span>
<span class="t" style="left:480.73px;top:252.92px;font-size:19.1px;line-height:22.92px;color:#111;letter-spacing:-0.000px;">3</span>
<span class="t" style="left:572.16px;top:252.92px;font-size:19.1px;line-height:22.92px;color:#111;letter-spacing:-0.000px;">8</span>
<span class="t" style="left:206.44px;top:281.42px;font-size:19.1px;line-height:22.92px;color:#111;letter-spacing:0.000px;">4</span>
<span class="t" style="left:297.87px;top:281.42px;font-size:19.1px;line-height:22.92px;color:#111;letter-spacing:-0.000px;">2</span>
<span class="t" style="left:389.30px;top:281.42px;font-size:19.1px;line-height:22.92px;color:#111;letter-spacing:-0.000px;">5</span>
<span class="t" style="left:480.73px;top:281.42px;font-size:19.1px;line-height:22.92px;color:#111;letter-spacing:-0.000px;">2</span>
<span class="t" style="left:561.53px;top:281.42px;font-size:19.1px;line-height:22.92px;color:#111;letter-spacing:-0.000px;">13</span>
<span class="t" style="left:206.44px;top:309.92px;font-size:19.1px;line-height:22.92px;color:#111;letter-spacing:0.000px;">5</span>
<span class="t" style="left:297.87px;top:309.92px;font-size:19.1px;line-height:22.92px;color:#111;letter-spacing:-0.000px;">1</span>
<span class="t" style="left:389.30px;top:309.92px;font-size:19.1px;line-height:22.92px;color:#111;letter-spacing:-0.000px;">2</span>
<span class="t" style="left:480.73px;top:309.92px;font-size:19.1px;line-height:22.92px;color:#111;letter-spacing:-0.000px;">1</span>
<span class="t" style="left:572.16px;top:309.92px;font-size:19.1px;line-height:22.92px;color:#111;letter-spacing:-0.000px;">9</span>
<span class="t" style="left:206.44px;top:338.42px;font-size:19.1px;line-height:22.92px;color:#111;letter-spacing:0.000px;">9</span>
<span class="t" style="left:297.87px;top:338.42px;font-size:19.1px;line-height:22.92px;color:#111;letter-spacing:-0.000px;">7</span>
<span class="t" style="left:389.30px;top:338.42px;font-size:19.1px;line-height:22.92px;color:#111;letter-spacing:-0.000px;">8</span>
<span class="t" style="left:480.73px;top:338.42px;font-size:19.1px;line-height:22.92px;color:#111;letter-spacing:-0.000px;">6</span>
<span class="t" style="left:561.53px;top:338.42px;font-size:19.1px;line-height:22.92px;color:#111;letter-spacing:-0.000px;">30</span>
<div class="b" style="left:128.43px;top:418.5px;width:93.63000000000001px;height:30.7px;border:1.5px solid #1e6f43;box-sizing:border-box;background:#fff;"></div>
<div class="b" style="left:219.46px;top:446.4px;width:3px;height:3px;background:#1e6f43;outline:0.7px solid #fff;"></div>
<span class="t" style="left:132.50px;top:423.92px;font-size:19.1px;line-height:22.92px;color:#111;letter-spacing:0.000px;">=</span>
<span class="t" style="left:143.50px;top:423.92px;font-size:19.1px;line-height:22.92px;color:#8cbde8;letter-spacing:-0.804px;">$F3</span>
<span class="t" style="left:175.50px;top:424.42px;font-size:19.1px;line-height:22.92px;color:#111;letter-spacing:0.000px;">*</span>
<svg class="b" style="left:219.5px;top:339.5px;" width="11" height="11" viewBox="0 0 11 11"><path d="M3.8 0.8h3.4v3h3v3.4h-3v3H3.8v-3h-3V3.8h3z" fill="#fff" stroke="#222" stroke-width="1.1"/></svg>
<div class="b" style="left:1008.3px;top:163.5px;width:15.700000000000045px;height:566.5px;background:#2f3030;"></div>
<svg class="b" style="left:1012px;top:167.5px;" width="8" height="6" viewBox="0 0 8 6"><path d="M4 0.6L7.6 5.4H0.4z" fill="#cfcfcf"/></svg>
<div class="b" style="left:1012.8px;top:176.8px;width:6.2px;height:511.5px;background:#c6c6c6;border-radius:3px;"></div>
<svg class="b" style="left:1012px;top:722.5px;" width="8" height="6" viewBox="0 0 8 6"><path d="M4 5.4L7.6 0.6H0.4z" fill="#cfcfcf"/></svg>
<div class="b" style="left:0px;top:730px;width:1024px;height:21.3px;background:#2a2d32;"></div>
<div class="b" style="left:0px;top:730px;width:1024px;height:1px;background:#3a3b3c;"></div>
<div class="b" style="left:12px;top:731px;width:63.2px;height:20.2px;background:#666;"></div>
<svg class="b" style="left:20.5px;top:737px;" width="5" height="7" viewBox="0 0 5 7"><path d="M4.4 0.6v5.8L0.6 3.5z" fill="#9d9d9d"/></svg>
<svg class="b" style="left:41px;top:737px;" width="5" height="7" viewBox="0 0 5 7"><path d="M0.6 0.6v5.8L4.4 3.5z" fill="#9d9d9d"/></svg>
<div class="b" style="left:76.7px;top:731.6px;width:45.6px;height:17px;background:#676767;border:1px solid #4a4a4a;box-sizing:border-box;"></div>
<span class="t" style="left:85.40px;top:734.04px;font-size:9.6px;line-height:11.52px;color:#ffffff;letter-spacing:-0.338px;">Sheet1</span>
<div class="b" style="left:125.5px;top:731.6px;width:45.6px;height:17px;background:#676767;border:1px solid #4a4a4a;box-sizing:border-box;"></div>
<span class="t" style="left:134.20px;top:734.04px;font-size:9.6px;line-height:11.52px;color:#ffffff;letter-spacing:-0.338px;">Sheet2</span>
<div class="b" style="left:174.3px;top:731.6px;width:45.6px;height:17px;background:#676767;border:1px solid #4a4a4a;box-sizing:border-box;"></div>
<span class="t" style="left:183.00px;top:734.04px;font-size:9.6px;line-height:11.52px;color:#ffffff;letter-spacing:-0.338px;">Sheet4</span>
<div class="b" style="left:223.09999999999997px;top:731.6px;width:45.6px;height:17px;background:#676767;border:1px solid #4a4a4a;box-sizing:border-box;"></div>
<span class="t" style="left:231.80px;top:734.04px;font-size:9.6px;line-height:11.52px;color:#ffffff;letter-spacing:-0.338px;">Sheet5</span>
<div class="b" style="left:270.3px;top:729.6px;width:48.3px;height:20.4px;background:#fff;"></div>
<div class="b" style="left:270.3px;top:748.3px;width:48.3px;height:1.7px;background:#1f7a4a;"></div>
<span class="t" style="left:278.90px;top:734.04px;font-size:9.6px;line-height:11.52px;color:#1d7044;letter-spacing:-0.080px;font-weight:700;">Sheet6</span>
<div class="b" style="left:318.6px;top:730.6px;width:42px;height:20px;background:#666;"></div>
<svg class="b" style="left:343.4px;top:734px;" width="12" height="12" viewBox="0 0 12 12"><circle cx="6" cy="6" r="5.1" fill="none" stroke="#fff" stroke-width="1.3"/><path d="M3.2 6h5.6M6 3.2v5.6" stroke="#fff" stroke-width="1.6"/></svg>
<div class="b" style="left:624.5px;top:730.8px;width:383.79999999999995px;height:20.5px;background:#2f3030;"></div>
<div class="b" style="left:614.1px;top:737.6px;width:1.3px;height:1.3px;background:#d8d8d8;"></div>
<div class="b" style="left:614.1px;top:740.4px;width:1.3px;height:1.3px;background:#d8d8d8;"></div>
<div class="b" style="left:614.1px;top:743.2px;width:1.3px;height:1.3px;background:#d8d8d8;"></div>
<svg class="b" style="left:628px;top:736.5px;" width="6" height="7" viewBox="0 0 6 7"><path d="M5.6 0.4v6.2L0.4 3.5z" fill="#d0d0d0"/></svg>
<div class="b" style="left:637.7px;top:736.7px;width:322.3px;height:6.8px;background:#c8c8c8;border-radius:3.4px;"></div>
<svg class="b" style="left:1000.5px;top:736.5px;" width="6" height="7" viewBox="0 0 6 7"><path d="M0.4 0.4v6.2L5.6 3.5z" fill="#d0d0d0"/></svg>
<div class="b" style="left:1008.3px;top:730px;width:15.700000000000045px;height:21.3px;background:#2f3030;"></div>
<div class="b" style="left:0px;top:751.3px;width:1024px;height:15.2px;background:#2f3030;"></div>
<span class="t" style="left:6.20px;top:754.24px;font-size:8.6px;line-height:10.32px;color:#ffffff;letter-spacing:-0.151px;">Enter</span>
<svg class="b" style="left:43px;top:753.5px;" width="11" height="11" viewBox="0 0 11 11"><circle cx="5" cy="2" r="1.4" fill="none" stroke="#e4e4e4" stroke-width="0.9"/><path d="M1 4.2h8 M3.4 4.4v2.4L2 10 M6.6 4.4v2.4l0.6 1.4 M6.8 7.6l3.4 3M10.2 7.6l-3.4 3" fill="none" stroke="#e4e4e4" stroke-width="0.9"/></svg>
<span class="t" style="left:57.00px;top:754.24px;font-size:8.6px;line-height:10.32px;color:#ffffff;letter-spacing:-0.046px;">Accessibility: Investigate</span>
<svg class="b" style="left:808.5px;top:753.5px;" width="11" height="10" viewBox="0 0 11 10"><rect x="0.6" y="0.6" width="9.4" height="8.6" fill="none" stroke="#8e8e8e" stroke-width="0.9"/><path d="M0.6 3.5h9.4M0.6 6.4h9.4M3.7 0.6v8.6M6.8 0.6v8.6" fill="none" stroke="#8e8e8e" stroke-width="0.9"/></svg>
<svg class="b" style="left:838.5px;top:753.5px;" width="11" height="10" viewBox="0 0 11 10"><rect x="0.6" y="0.6" width="9.4" height="8.6" fill="none" stroke="#8e8e8e" stroke-width="0.9"/><rect x="2.8" y="2.6" width="5" height="4.6" fill="none" stroke="#8e8e8e" stroke-width="0.9"/></svg>
<svg class="b" style="left:868.5px;top:753.5px;" width="11" height="10" viewBox="0 0 11 10"><rect x="0.6" y="0.6" width="9.4" height="8.6" fill="none" stroke="#8e8e8e" stroke-width="0.9"/><path d="M3.6 0.6v4.6h3.4V0.6 M0.6 5.2h9.4" fill="none" stroke="#8e8e8e" stroke-width="0.9"/></svg>
<div class="b" style="left:893.5px;top:758.4px;width:5px;height:1px;background:#8e8e8e;"></div>
<div class="b" style="left:903.5px;top:758.4px;width:76px;height:1px;background:#a5a5a5;"></div>
<div class="b" style="left:940px;top:755.4px;width:1.4px;height:7px;background:#b5b5b5;"></div>
<div class="b" style="left:982px;top:758.4px;width:5.4px;height:1px;background:#777;"></div>
<div class="b" style="left:984.2px;top:756.2px;width:1px;height:5.4px;background:#777;"></div>
<span class="t" style="left:999.00px;top:753.86px;font-size:8.4px;line-height:10.08px;color:#777;letter-spacing:-0.496px;">190%</span>
<div class="b" style="left:0px;top:766.5px;width:1024px;height:1.5px;background:#e6e6e6;"></div>
</div>
</body></html>
